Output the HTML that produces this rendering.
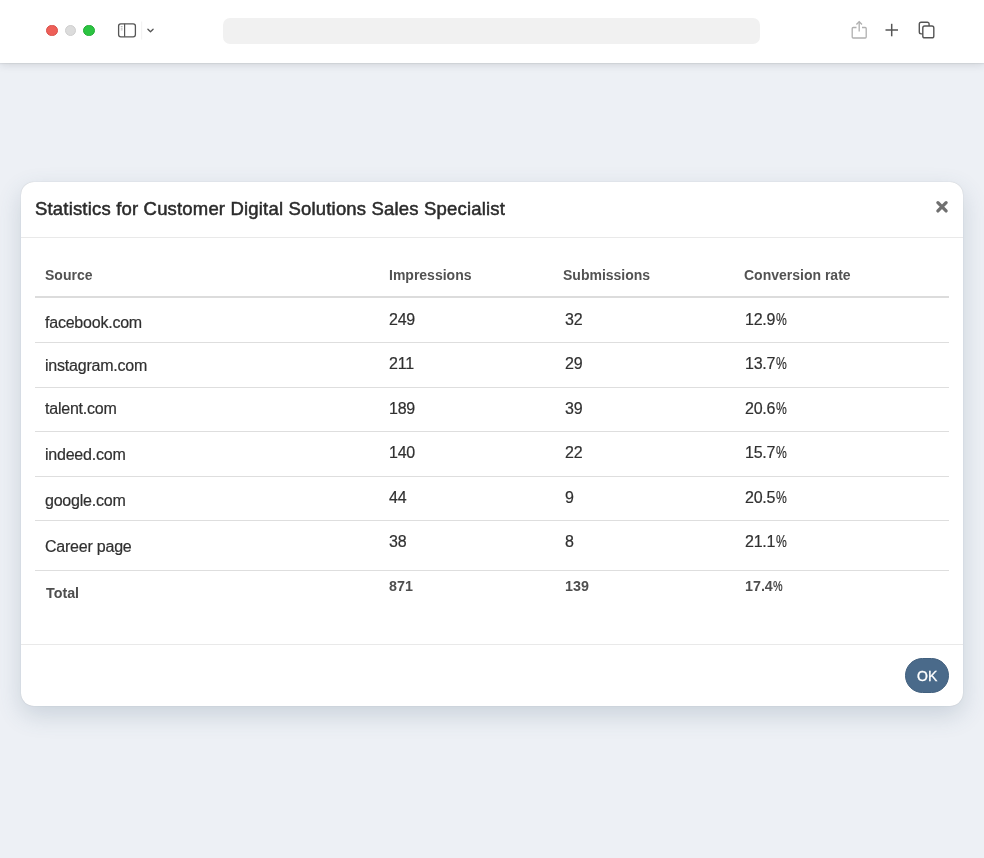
<!DOCTYPE html>
<html>
<head>
<meta charset="utf-8">
<style>
*{box-sizing:border-box;margin:0;padding:0}
html,body{width:984px;height:858px;overflow:hidden}
body{background:#edf0f5;font-family:"Liberation Sans",sans-serif;position:relative;color:#333}
.bar{position:absolute;left:0;top:0;width:984px;height:63px;background:#fff;box-shadow:0 1px 1px rgba(0,0,0,.05),0 2px 8px rgba(30,40,50,.13)}
.dot{position:absolute;top:24.5px;width:11.6px;height:11.6px;border-radius:50%}
.addr{position:absolute;left:223px;top:18px;width:537px;height:26px;border-radius:7px;background:#f1f1f1}
.modal{position:absolute;left:21px;top:182px;width:942px;height:524px;background:#fff;border-radius:13px;box-shadow:0 0 1px rgba(0,0,0,.22),0 9px 24px rgba(60,90,115,.20)}
.t{position:absolute;white-space:nowrap;line-height:1;will-change:transform}
.hline{position:absolute;left:0;width:942px;height:1px;background:#e9e9e9}
.rl{position:absolute;left:14px;width:914px;height:1px;background:#dedede}
.th{font-weight:bold;font-size:14px;color:#525252}
.td{font-size:16px;letter-spacing:-.22px;color:#303030;-webkit-text-stroke:.2px #303030}
.tb{font-weight:bold;font-size:14px;color:#4e4e4e}
.pc{display:inline-block;transform:scaleX(.76);transform-origin:0 0;margin-left:.4px}
.ok{position:absolute;left:884px;top:476px;width:44px;height:35px;border-radius:18px;background:#4a6a8a;border:1px solid #42607e}
</style>
</head>
<body>
<div class="bar">
  <div class="dot" style="left:46.2px;background:#ee5f58;border:0.5px solid #d9504a"></div>
  <div class="dot" style="left:64.8px;background:#dcdcdc;border:0.5px solid #cfcfcf"></div>
  <div class="dot" style="left:83.2px;background:#2bc441;border:0.5px solid #22ac35"></div>
  <svg style="position:absolute;left:110px;top:15px" width="60" height="30" viewBox="0 0 60 30">
    <rect x="8.6" y="8.8" width="16.8" height="13.0" rx="2.2" fill="none" stroke="#555" stroke-width="1.3"/>
    <line x1="14.6" y1="8.8" x2="14.6" y2="21.8" stroke="#555" stroke-width="1.2"/>
    <line x1="10.8" y1="11.5" x2="12.6" y2="11.5" stroke="#999" stroke-width=".7"/>
    <line x1="10.8" y1="13.2" x2="12.6" y2="13.2" stroke="#999" stroke-width=".7"/>
    <line x1="10.8" y1="14.9" x2="12.6" y2="14.9" stroke="#999" stroke-width=".7"/>
    <line x1="31.7" y1="6.5" x2="31.7" y2="24.5" stroke="#f1f1f1" stroke-width="1"/>
    <polyline points="37.9,14.2 40.5,16.8 43.1,14.2" fill="none" stroke="#555" stroke-width="1.3" stroke-linecap="round" stroke-linejoin="round"/>
  </svg>
  <div class="addr"></div>
  <svg style="position:absolute;left:840px;top:10px" width="110" height="40" viewBox="0 0 110 40">
    <path d="M16.5 17.5 H13.2 a1 1 0 0 0 -1 1 V27 a1 1 0 0 0 1 1 H25.2 a1 1 0 0 0 1 -1 V18.5 a1 1 0 0 0 -1 -1 H22" fill="none" stroke="#b0b0b0" stroke-width="1.3"/>
    <line x1="19.2" y1="11.8" x2="19.2" y2="21.5" stroke="#b0b0b0" stroke-width="1.3"/>
    <polyline points="16.4,14.5 19.2,11.7 22,14.5" fill="none" stroke="#b0b0b0" stroke-width="1.3"/>
    <line x1="45.5" y1="20" x2="58" y2="20" stroke="#555" stroke-width="1.5"/>
    <line x1="51.7" y1="13.8" x2="51.7" y2="26.3" stroke="#555" stroke-width="1.5"/>
    <path d="M82.8 23.9 H81.1 a1.8 1.8 0 0 1 -1.8 -1.8 V14.1 a1.8 1.8 0 0 1 1.8 -1.8 H87.3 a1.8 1.8 0 0 1 1.8 1.8 V16" fill="none" stroke="#555" stroke-width="1.4"/>
    <rect x="82.8" y="16" width="11" height="11.8" rx="1.9" fill="none" stroke="#555" stroke-width="1.4"/>
  </svg>
</div>

<div class="modal">
  <div class="t" style="left:13.5px;top:18px;font-size:18.5px;letter-spacing:.18px;color:#2b2b2b;-webkit-text-stroke:.5px #2b2b2b">Statistics for Customer Digital Solutions Sales Specialist</div>
  <svg style="position:absolute;left:914px;top:18px" width="14" height="14" viewBox="0 0 14 14">
    <path d="M2.9 2.7 L11.1 10.9 M11.1 2.7 L2.9 10.9" stroke="#707070" stroke-width="3.3" stroke-linecap="round"/>
  </svg>
  <div class="hline" style="top:55px"></div>

  <div class="t th" style="left:24px;top:86px">Source</div>
  <div class="t th" style="left:368px;top:86px">Impressions</div>
  <div class="t th" style="left:542px;top:86px">Submissions</div>
  <div class="t th" style="left:723px;top:86px">Conversion rate</div>
  <div class="rl" style="top:114px;height:2px;background:#dcdcdc"></div>

  <div class="t td" style="left:23.5px;top:133px">facebook.com</div>
  <div class="t td" style="left:368px;top:130px">249</div>
  <div class="t td" style="left:544px;top:130px">32</div>
  <div class="t td" style="left:724px;top:130px">12.9<span class="pc">%</span></div>
  <div class="rl" style="top:160px"></div>

  <div class="t td" style="left:23.5px;top:176px">instagram.com</div>
  <div class="t td" style="left:368px;top:174px">211</div>
  <div class="t td" style="left:544px;top:174px">29</div>
  <div class="t td" style="left:724px;top:174px">13.7<span class="pc">%</span></div>
  <div class="rl" style="top:205px"></div>

  <div class="t td" style="left:23.5px;top:219px">talent.com</div>
  <div class="t td" style="left:368px;top:219px">189</div>
  <div class="t td" style="left:544px;top:219px">39</div>
  <div class="t td" style="left:724px;top:219px">20.6<span class="pc">%</span></div>
  <div class="rl" style="top:249px"></div>

  <div class="t td" style="left:23.5px;top:265px">indeed.com</div>
  <div class="t td" style="left:368px;top:263px">140</div>
  <div class="t td" style="left:544px;top:263px">22</div>
  <div class="t td" style="left:724px;top:263px">15.7<span class="pc">%</span></div>
  <div class="rl" style="top:294px"></div>

  <div class="t td" style="left:23.5px;top:311px">google.com</div>
  <div class="t td" style="left:368px;top:308px">44</div>
  <div class="t td" style="left:544px;top:308px">9</div>
  <div class="t td" style="left:724px;top:308px">20.5<span class="pc">%</span></div>
  <div class="rl" style="top:338px"></div>

  <div class="t td" style="left:23.5px;top:357px">Career page</div>
  <div class="t td" style="left:368px;top:352px">38</div>
  <div class="t td" style="left:544px;top:352px">8</div>
  <div class="t td" style="left:724px;top:352px">21.1<span class="pc">%</span></div>
  <div class="rl" style="top:388px"></div>

  <div class="t tb" style="left:24.5px;top:403.5px;font-size:14.3px">Total</div>
  <div class="t tb" style="left:368px;top:397px;font-size:14.3px">871</div>
  <div class="t tb" style="left:544px;top:397px;font-size:14.3px">139</div>
  <div class="t tb" style="left:724px;top:397px;font-size:14.3px">17.4<span class="pc">%</span></div>

  <div class="hline" style="top:462px"></div>
  <div class="ok"><div class="t" style="left:11px;top:10px;font-size:14px;color:#fff;-webkit-text-stroke:.3px #fff">OK</div></div>
</div>
</body>
</html>
